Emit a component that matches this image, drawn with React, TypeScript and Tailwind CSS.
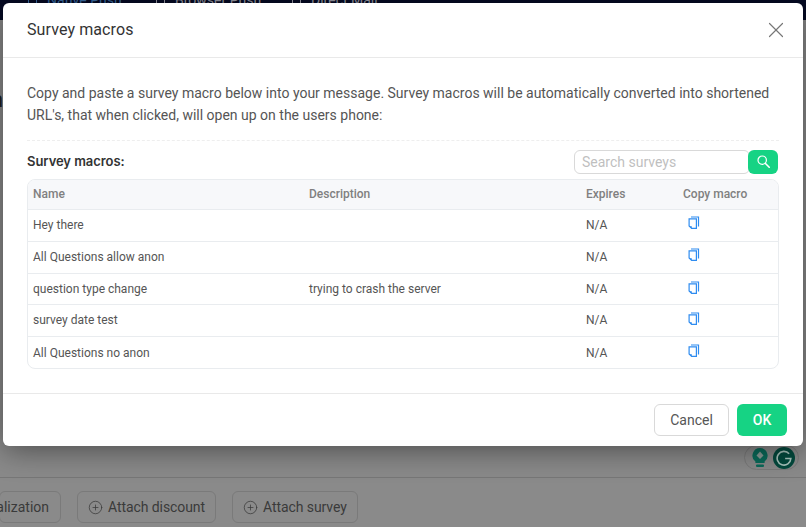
import { CirclePlus, X } from "lucide-react";

const rows = [
  { name: "Hey there", description: "", rowClass: "h-8 pb-0.5" },
  { name: "All Questions allow anon", description: "", rowClass: "h-8 pb-0.5" },
  { name: "question type change", description: "trying to crash the server", rowClass: "h-[31px]" },
  { name: "survey date test", description: "", rowClass: "h-8 pb-px" },
  { name: "All Questions no anon", description: "", rowClass: "h-[31px]" },
];

const CopyIcon = () => (
  <svg width="12" height="14" viewBox="0 0 12 14" fill="none" className="text-[#2f8cf0]">
    <path d="M3 1h7.5v9.5" stroke="currentColor" strokeWidth="1.2" />
    <path d="M1.1 2.8h7.3v9.6H3.6L1.1 10z" stroke="currentColor" strokeWidth="1.2" />
    <path d="M1.5 10.2h2.3v2.2z" fill="currentColor" />
  </svg>
);

const SearchIcon = () => (
  <svg width="13" height="13" viewBox="0 0 13 13" fill="none" stroke="white" strokeWidth="1.2">
    <circle cx="5.2" cy="5.2" r="4.2" />
    <path d="M8.2 8.2 12.2 12.2" strokeWidth="1.6" strokeLinecap="round" />
  </svg>
);

const AttachButton = ({ label, widthClass }: { label: string; widthClass: string }) => (
  <div className={`flex h-8 items-center gap-[5px] rounded-md border border-[#7a7a7a] pl-[10px] text-sm tracking-[-0.08px] text-[#3a3a3a] ${widthClass}`}>
    <CirclePlus size={15} strokeWidth={1.2} />
    {label}
  </div>
);

export default function App() {
  return (
    <div className="relative h-[527px] w-[806px] overflow-hidden bg-[#8a8a8a] font-['Roboto',sans-serif]">
      {/* page behind the dimmed overlay */}
      <div className="flex h-5 bg-[#050a24] pl-7 text-sm leading-none text-[#3c6ea5]">
        <div className="-mt-[7px] flex items-start">
          <span className="mt-px h-[10px] w-[9px] border border-[#3c6ea5]" />
          <span className="ml-[10px] w-[109px]">Native Push</span>
          <span className="mt-px h-[10px] w-[9px] border border-[#9a9aa5]" />
          <span className="ml-[10px] w-[117px] text-[#9a9aa5]">Browser Push</span>
          <span className="mt-px h-[10px] w-[9px] border border-[#9a9aa5]" />
          <span className="ml-[10px] text-[#9a9aa5]">Direct Mail</span>
        </div>
      </div>
      <div className="mt-[65px] h-[30px] text-[22px] leading-[30px] text-[#1e1e1e]">
        <span className="-ml-[9px]">n</span>
      </div>
      <div className="mt-[362px] flex gap-4 border-t border-[#777777] pt-[13px]">
        <div className="-ml-px flex h-8 w-[62px] items-center justify-end rounded-md border border-[#7a7a7a] pr-[11px] text-sm text-[#3a3a3a]">
          alization
        </div>
        <AttachButton label="Attach discount" widthClass="w-[139px]" />
        <AttachButton label="Attach survey" widthClass="w-[126px]" />
      </div>

      {/* grammarly widget */}
      <div className="absolute left-[744px] top-[445px] flex h-[25px] w-[55px] items-center justify-between rounded-full border border-[#7a7a7a] pl-[7px] pr-[3px]">
        <svg width="16" height="20" viewBox="0 0 16 20">
          <path d="M8 0a7.6 7.6 0 0 1 4.6 13.6V15H3.4v-1.4A7.6 7.6 0 0 1 8 0z" fill="#0b6b5a" />
          <path d="M8 3.5 11.5 7.5 8 11 4.5 7.5z" fill="#8a9a95" />
          <rect x="4" y="16.5" width="8" height="2.5" rx="1" fill="#0b6b5a" />
        </svg>
        <div className="flex h-[22px] w-[22px] items-center justify-center rounded-full bg-[#03493d]">
          <svg width="16" height="16" viewBox="0 0 14 14" fill="none" stroke="#a9c4bd" strokeWidth="1.4">
            <path d="M11.5 3.2A6 6 0 1 0 13 7.5H8" />
          </svg>
        </div>
      </div>

      {/* modal */}
      <div className="absolute left-[3px] top-[3px] flex h-[443px] w-[800px] flex-col rounded-md bg-white shadow-[0_4px_30px_rgba(0,0,0,0.45)]">
        <div className="flex h-[55px] shrink-0 items-center justify-between border-b border-[#e9e9e9] pl-6 pr-[14px]">
          <h2 className="text-base font-normal tracking-[0.1px] text-[#333333]">Survey macros</h2>
          <X size={26} strokeWidth={1.1} className="text-[#777777]" />
        </div>
        <div className="flex-1 px-6 pt-6">
          <p className="border-b border-dashed border-[#eeeeee] pb-[14px] text-sm leading-[22px] text-[#555555]">
            Copy and paste a survey macro below into your message. Survey macros will be automatically converted into shortened URL's, that when clicked, will open up on the users phone:
          </p>
          <div className="mt-[9px] flex h-6 items-center justify-between">
            <span className="font-['Inter',sans-serif] text-[13px] font-semibold tracking-[-0.05px] text-[#333333]">Survey macros:</span>
            <div className="mr-px flex">
              <div className="flex h-6 w-[176px] items-center rounded-md border border-[#d9d9d9] pl-[7px] text-sm text-[#bfbfbf]">
                Search surveys
              </div>
              <div className="-ml-0.5 flex h-6 w-[30px] items-center justify-center rounded-md bg-[#16d384] pb-px">
                <SearchIcon />
              </div>
            </div>
          </div>
          <div className="mt-[5px] overflow-hidden rounded-lg border border-[#e9ecef] text-xs text-[#555555]">
            <div className="flex h-[30px] items-center border-b border-[#e9ecef] bg-[#f7f8fa] pb-0.5 font-medium text-[#808080]">
              <span className="w-[281px] pl-[5px]">Name</span>
              <span className="w-[277px]">Description</span>
              <span className="w-[97px]">Expires</span>
              <span>Copy macro</span>
            </div>
            {rows.map((row) => (
              <div key={row.name} className={`flex items-center border-b border-[#e9ecef] last:border-b-0 ${row.rowClass}`}>
                <span className="w-[281px] pl-[5px]">{row.name}</span>
                <span className="w-[277px]">{row.description}</span>
                <span className="w-[97px]">N/A</span>
                <span className="-mt-[3px] pl-[5px]">
                  <CopyIcon />
                </span>
              </div>
            ))}
          </div>
        </div>
        <div className="flex h-[53px] shrink-0 items-center justify-end gap-2 border-t border-[#e9e9e9] pr-4">
          <button className="h-8 w-[75px] rounded-md border border-[#d9d9d9] bg-white text-sm text-[#555555]">Cancel</button>
          <button className="h-8 w-[50px] rounded-md bg-[#16d384] text-sm font-medium text-white">OK</button>
        </div>
      </div>
    </div>
  );
}
